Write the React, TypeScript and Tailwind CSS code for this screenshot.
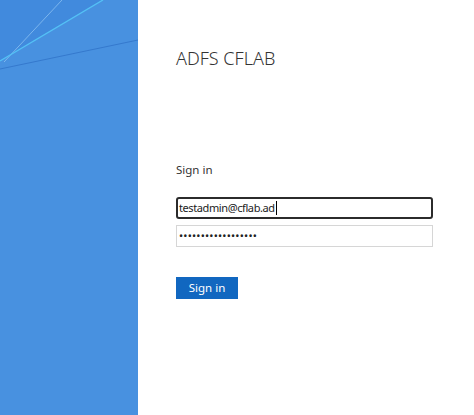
export default function App() {
  return (
    <div className="flex h-[415px] w-[474px] overflow-hidden bg-white" style={{ fontFamily: '"Noto Sans", "Open Sans", sans-serif' }}>
      <div className="relative h-full w-[138px] shrink-0 bg-[#4891e0]">
        <svg className="absolute inset-0" width="138" height="415" viewBox="0 0 138 415">
          <polygon points="0,0 103,0 0,61" fill="#3f87db" opacity="0.7" />
          <line x1="4" y1="62" x2="62" y2="0" stroke="#8cc2f2" strokeWidth="1" opacity="0.8" />
          <line x1="0" y1="61" x2="103" y2="0" stroke="#54c1f5" strokeWidth="1.4" />
          <line x1="0" y1="69" x2="138" y2="40" stroke="#3579cd" strokeWidth="1" />
        </svg>
      </div>
      <div className="flex flex-1 flex-col pl-[38px] pt-[46px]">
        <h1 className="text-[18px] font-light leading-[24px] text-[#333]">ADFS CFLAB</h1>
        <p className="mt-[92px] text-[11.5px] leading-[16px] text-[#333]">Sign in</p>
        <div className="mt-[19px] flex h-[22px] w-[257px] items-center rounded-[3px] border-2 border-[#2b2b2b] px-[1px] text-[11px] tracking-[-0.4px] text-[#222]">
          testadmin@cflab.ad<span className="ml-[1px] h-[14px] w-px bg-black" />
        </div>
        <div className="mt-[6px] flex h-[22px] w-[257px] items-center border border-[#d6d6d6] px-[2px] text-[11px] tracking-[0.2px] text-[#222]">
          ••••••••••••••••••
        </div>
        <button className="mt-[30px] h-[22px] w-[62px] bg-[#1167c0] text-[11.5px] text-white">Sign in</button>
      </div>
    </div>
  );
}
